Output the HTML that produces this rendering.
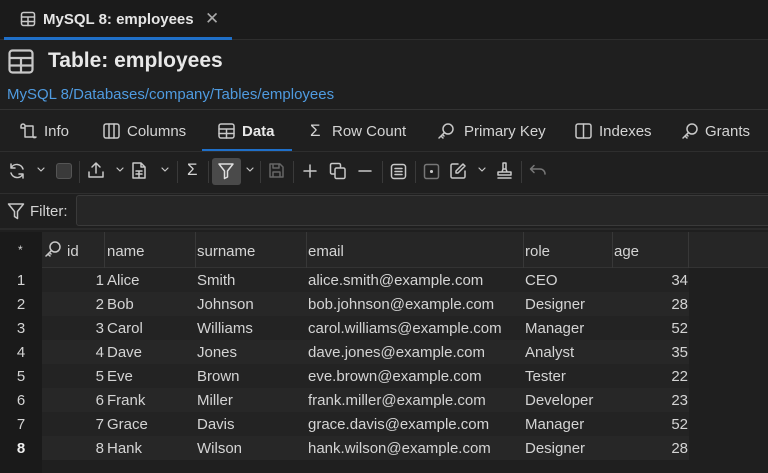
<!DOCTYPE html>
<html><head><meta charset="utf-8"><style>
*{margin:0;padding:0;box-sizing:border-box}
body{width:768px;height:473px;overflow:hidden;background:#1f1f1f;color:#d4d4d4;font-family:"Liberation Sans",sans-serif;font-size:15px;position:relative}
.a{position:absolute;white-space:nowrap}
svg{position:absolute;fill:none;stroke:#c8c8c8;stroke-width:1.5;stroke-linecap:round;stroke-linejoin:round}
.sep{position:absolute;width:1px;background:#3a3a3a}
.row{position:absolute;left:42px;width:647px;height:24px}
.c{position:absolute;top:4px}
.n{position:absolute;left:0;width:42px;text-align:center}
</style></head><body>
<div class="a" style="left:0;top:0;width:768px;height:40px;background:#1b1b1b;border-bottom:1px solid #2e2e2e"></div>
<div class="a" style="left:4px;top:37px;width:228px;height:3px;background:#1f6fc8"></div>
<svg style="left:20px;top:11px" width="16" height="16" viewBox="0 0 16 16"><rect x="1.5" y="1.5" width="13" height="13" rx="2"/><path d="M1.5 6h13M1.5 10.5h13M8 6v8.5"/></svg>
<div class="a" style="left:43px;top:11px;font-weight:bold;font-size:15px;color:#e6e6e6">MySQL 8: employees</div>
<div class="a" style="left:205px;top:9px;font-size:17px;color:#aaa">✕</div>
<svg style="left:8px;top:49px" width="26" height="26" viewBox="0 0 26 26"><rect x="1.5" y="1.5" width="23" height="22" rx="3" stroke-width="2.2"/><path d="M1.5 9h23M1.5 16.5h23M13 9v14.5" stroke-width="2.2"/></svg>
<div class="a" style="left:48px;top:49px;font-weight:bold;font-size:21px;color:#e8e8e8">Table: employees</div>
<div class="a" style="left:7px;top:86px;font-size:15px;color:#4f9be0">MySQL 8/Databases/company/Tables/employees</div>
<div class="a" style="left:0;top:109px;width:768px;height:1px;background:#333"></div>
<div class="a" style="left:44px;top:123px">Info</div>
<svg style="left:19px;top:123px" width="18" height="17" viewBox="0 0 18 17"><path d="M2 3a2 2 0 0 1 4 0v11h10M6 3h8v11M2 3v2h3M14 14a2 2 0 0 0 3 0"/></svg>
<svg style="left:103px;top:123px" width="17" height="16" viewBox="0 0 17 16"><rect x="1" y="1" width="15" height="14" rx="2"/><path d="M6 1v14M11 1v14"/></svg>
<div class="a" style="left:127px;top:123px">Columns</div>
<svg style="left:218px;top:123px" width="17" height="16" viewBox="0 0 17 16"><rect x="1" y="1" width="15" height="14" rx="2"/><path d="M1 6h15M1 10.5h15M8.5 6v9"/></svg>
<div class="a" style="left:242px;top:123px;font-weight:bold;color:#e8e8e8">Data</div>
<div class="a" style="left:202px;top:149px;width:90px;height:3px;background:#1f6fc8"></div>
<div class="a" style="left:310px;top:121px;font-size:17px">Σ</div>
<div class="a" style="left:332px;top:123px">Row Count</div>
<svg style="left:437px;top:122px" width="18" height="18" viewBox="0 0 18 18"><circle cx="11" cy="7" r="5"/><path d="M7.5 10.5L2 16M4 14l2 2M5.5 12.5l1.5 1.5"/></svg>
<div class="a" style="left:464px;top:123px">Primary Key</div>
<svg style="left:575px;top:123px" width="17" height="16" viewBox="0 0 17 16"><rect x="1" y="1" width="15" height="14" rx="2"/><path d="M8.5 1v14"/></svg>
<div class="a" style="left:599px;top:123px">Indexes</div>
<svg style="left:681px;top:122px" width="18" height="18" viewBox="0 0 18 18"><circle cx="11" cy="7" r="5"/><path d="M7.5 10.5L2 16M4 14l2 2M5.5 12.5l1.5 1.5"/></svg>
<div class="a" style="left:705px;top:123px">Grants</div>
<div class="a" style="left:0;top:151px;width:768px;height:1px;background:#2e2e2e"></div>
<!-- toolbar -->
<svg style="left:8px;top:162px" width="18" height="18" viewBox="0 0 18 18"><path d="M15 7A6.5 6.5 0 0 0 3 6M3 11a6.5 6.5 0 0 0 12 1M3 2v4h4M15 16v-4h-4"/></svg>
<svg style="left:37px;top:167px" width="8" height="6" viewBox="0 0 8 6"><path d="M1 1l3 3 3-3" stroke-width="1.2"/></svg>
<div class="a" style="left:56px;top:163px;width:16px;height:16px;border:1.5px solid #555;border-radius:3px;background:#3a3a3a"></div>
<div class="sep" style="left:79px;top:161px;height:22px"></div>
<svg style="left:87px;top:161px" width="18" height="18" viewBox="0 0 18 18"><path d="M9 12V2M5 6l4-4 4 4M2 11v5h14v-5"/></svg>
<svg style="left:116px;top:167px" width="8" height="6" viewBox="0 0 8 6"><path d="M1 1l3 3 3-3" stroke-width="1.2"/></svg>
<svg style="left:131px;top:161px" width="16" height="18" viewBox="0 0 16 18"><path d="M2 2h8l4 4v11H2zM10 2v4h4M5 10h6M5 13h6M8 10v6"/></svg>
<svg style="left:161px;top:167px" width="8" height="6" viewBox="0 0 8 6"><path d="M1 1l3 3 3-3" stroke-width="1.2"/></svg>
<div class="sep" style="left:177px;top:161px;height:22px"></div>
<div class="a" style="left:187px;top:160px;font-size:17px">Σ</div>
<div class="sep" style="left:208px;top:161px;height:22px"></div>
<div class="a" style="left:212px;top:158px;width:29px;height:27px;background:#4a4a4a;border-radius:3px"></div>
<svg style="left:217px;top:162px" width="18" height="18" viewBox="0 0 18 18"><path d="M2 2h14l-5.5 7v6l-3 1.5V9z" stroke="#e0e0e0"/></svg>
<svg style="left:246px;top:167px" width="8" height="6" viewBox="0 0 8 6"><path d="M1 1l3 3 3-3" stroke-width="1.2"/></svg>
<div class="sep" style="left:260px;top:161px;height:22px"></div>
<svg style="left:268px;top:162px" width="17" height="17" viewBox="0 0 17 17"><path d="M2 2h10l3 3v10H2zM5 2v4h6V2M5 15v-5h7v5" stroke="#666"/></svg>
<div class="sep" style="left:293px;top:161px;height:22px"></div>
<svg style="left:302px;top:163px" width="16" height="16" viewBox="0 0 16 16"><path d="M8 2v12M2 8h12"/></svg>
<svg style="left:329px;top:162px" width="18" height="18" viewBox="0 0 18 18"><path d="M5 12H3a1.5 1.5 0 0 1-1.5-1.5V3A1.5 1.5 0 0 1 3 1.5h7A1.5 1.5 0 0 1 11.5 3v2"/><rect x="6" y="6" width="10" height="10.5" rx="1.5"/></svg>
<svg style="left:357px;top:163px" width="16" height="16" viewBox="0 0 16 16"><path d="M2 8h12"/></svg>
<div class="sep" style="left:382px;top:161px;height:22px"></div>
<svg style="left:390px;top:163px" width="17" height="17" viewBox="0 0 17 17"><rect x="1.5" y="1.5" width="14" height="14" rx="2.5"/><path d="M5 5.5h7M5 8.5h7M5 11.5h7"/></svg>
<div class="sep" style="left:415px;top:161px;height:22px"></div>
<svg style="left:423px;top:163px" width="17" height="17" viewBox="0 0 17 17"><rect x="1.5" y="1.5" width="14" height="14" rx="2" stroke="#777"/><circle cx="8.5" cy="8.5" r=".8" fill="#aaa"/></svg>
<svg style="left:449px;top:162px" width="18" height="18" viewBox="0 0 18 18"><path d="M9 2H3.5A1.5 1.5 0 0 0 2 3.5v11A1.5 1.5 0 0 0 3.5 16h11a1.5 1.5 0 0 0 1.5-1.5V9M14 2l2 2-7 7H7V9z"/></svg>
<svg style="left:478px;top:167px" width="8" height="6" viewBox="0 0 8 6"><path d="M1 1l3 3 3-3" stroke-width="1.2"/></svg>
<svg style="left:496px;top:161px" width="17" height="19" viewBox="0 0 17 19"><path d="M7 2h3v6h-3zM7 8l-1 3M10 8l1 3M2 11h13v3H2zM2 17h13"/></svg>
<div class="sep" style="left:521px;top:161px;height:22px"></div>
<svg style="left:529px;top:164px" width="18" height="14" viewBox="0 0 18 14"><path d="M2 5h9a5 5 0 0 1 5 5M5 1.5L1.5 5 5 8.5" stroke="#777"/></svg>
<div class="a" style="left:0;top:193px;width:768px;height:1px;background:#2e2e2e"></div>
<svg style="left:7px;top:202px" width="18" height="18" viewBox="0 0 18 18"><path d="M1.5 2h15l-6 7.5v7l-3-2v-5z"/></svg>
<div class="a" style="left:30px;top:203px">Filter:</div>
<div class="a" style="left:76px;top:195px;width:700px;height:31px;background:#262626;border:1px solid #3a3a3a;border-radius:3px"></div>
<div class="a" style="left:0;top:228px;width:768px;height:2px;background:#2a2a2a"></div>
<!-- grid -->
<div class="a" style="left:0;top:232px;width:42px;height:241px;background:#1a1a1a"></div>
<div class="a" style="left:42px;top:232px;width:647px;height:36px;background:#262626;border-bottom:1px solid #333"></div>
<div class="a" style="left:689px;top:232px;width:79px;height:36px;background:#262626;border-bottom:1px solid #333"></div>
<div class="sep" style="left:104px;top:232px;height:36px;background:#383838"></div>
<div class="sep" style="left:195px;top:232px;height:36px;background:#383838"></div>
<div class="sep" style="left:306px;top:232px;height:36px;background:#383838"></div>
<div class="sep" style="left:523px;top:232px;height:36px;background:#383838"></div>
<div class="sep" style="left:612px;top:232px;height:36px;background:#383838"></div>
<div class="sep" style="left:688px;top:232px;height:36px;background:#383838"></div>
<div class="a" style="left:18px;top:243px;font-size:12px">*</div>
<svg style="left:44px;top:240px" width="18" height="18" viewBox="0 0 18 18"><circle cx="11" cy="7" r="5"/><path d="M7.5 10.5L2 16M4 14l2 2M5.5 12.5l1.5 1.5"/></svg>
<div class="a" style="left:67px;top:243px">id</div>
<div class="a" style="left:107px;top:243px">name</div>
<div class="a" style="left:197px;top:243px">surname</div>
<div class="a" style="left:308px;top:243px">email</div>
<div class="a" style="left:525px;top:243px">role</div>
<div class="a" style="left:614px;top:243px">age</div>

<div class="row" style="top:268px;background:#232323"><span class="c" style="right:585px">1</span><span class="c" style="left:65px">Alice</span><span class="c" style="left:155px">Smith</span><span class="c" style="left:266px">alice.smith@example.com</span><span class="c" style="left:483px">CEO</span><span class="c" style="right:1px">34</span></div>
<div class="row" style="top:292px;background:#272727"><span class="c" style="right:585px">2</span><span class="c" style="left:65px">Bob</span><span class="c" style="left:155px">Johnson</span><span class="c" style="left:266px">bob.johnson@example.com</span><span class="c" style="left:483px">Designer</span><span class="c" style="right:1px">28</span></div>
<div class="row" style="top:316px;background:#232323"><span class="c" style="right:585px">3</span><span class="c" style="left:65px">Carol</span><span class="c" style="left:155px">Williams</span><span class="c" style="left:266px">carol.williams@example.com</span><span class="c" style="left:483px">Manager</span><span class="c" style="right:1px">52</span></div>
<div class="row" style="top:340px;background:#272727"><span class="c" style="right:585px">4</span><span class="c" style="left:65px">Dave</span><span class="c" style="left:155px">Jones</span><span class="c" style="left:266px">dave.jones@example.com</span><span class="c" style="left:483px">Analyst</span><span class="c" style="right:1px">35</span></div>
<div class="row" style="top:364px;background:#232323"><span class="c" style="right:585px">5</span><span class="c" style="left:65px">Eve</span><span class="c" style="left:155px">Brown</span><span class="c" style="left:266px">eve.brown@example.com</span><span class="c" style="left:483px">Tester</span><span class="c" style="right:1px">22</span></div>
<div class="row" style="top:388px;background:#272727"><span class="c" style="right:585px">6</span><span class="c" style="left:65px">Frank</span><span class="c" style="left:155px">Miller</span><span class="c" style="left:266px">frank.miller@example.com</span><span class="c" style="left:483px">Developer</span><span class="c" style="right:1px">23</span></div>
<div class="row" style="top:412px;background:#232323"><span class="c" style="right:585px">7</span><span class="c" style="left:65px">Grace</span><span class="c" style="left:155px">Davis</span><span class="c" style="left:266px">grace.davis@example.com</span><span class="c" style="left:483px">Manager</span><span class="c" style="right:1px">52</span></div>
<div class="row" style="top:436px;background:#272727"><span class="c" style="right:585px">8</span><span class="c" style="left:65px">Hank</span><span class="c" style="left:155px">Wilson</span><span class="c" style="left:266px">hank.wilson@example.com</span><span class="c" style="left:483px">Designer</span><span class="c" style="right:1px">28</span></div>

<div class="a n" style="top:272px">1</div>
<div class="a n" style="top:296px">2</div>
<div class="a n" style="top:320px">3</div>
<div class="a n" style="top:344px">4</div>
<div class="a n" style="top:368px">5</div>
<div class="a n" style="top:392px">6</div>
<div class="a n" style="top:416px">7</div>
<div class="a n" style="top:440px;font-weight:bold;color:#eee">8</div>
</body></html>
